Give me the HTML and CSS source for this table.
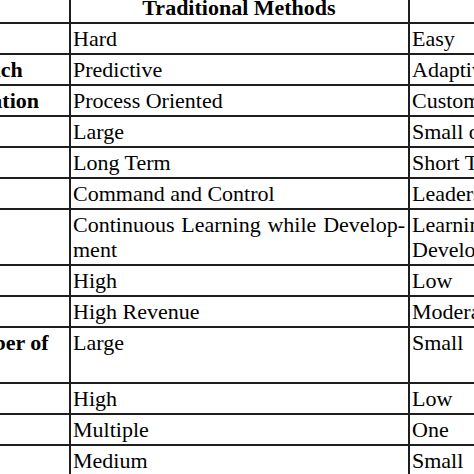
FILE: index.html
```html
<!DOCTYPE html>
<html lang="en">
<head>
<meta charset="utf-8">
<title>Traditional vs Agile Methods</title>
<link rel="stylesheet" href="styles.css">
</head>
<body>
<table class="cmp">
  <colgroup>
    <col class="c-param">
    <col class="c-trad">
    <col class="c-agile">
  </colgroup>
  <thead>
    <tr><th class="param"></th><th>Traditional Methods</th><th class="agile-head">Agile Methods</th></tr>
  </thead>
  <tbody>
    <tr><th class="param">Scope</th><td>Hard</td><td>Easy</td></tr>
    <tr><th class="param">Approach</th><td>Predictive</td><td>Adaptive</td></tr>
    <tr><th class="param">Orientation</th><td>Process Oriented</td><td>Customer Oriented</td></tr>
    <tr><th class="param">Size</th><td>Large</td><td>Small or Medium</td></tr>
    <tr><th class="param">Plan</th><td>Long Term</td><td>Short Term</td></tr>
    <tr><th class="param">Style</th><td>Command and Control</td><td>Leadership and Teamwork</td></tr>
    <tr><th class="param">Focus</th><td>Continuous Learning while Develop&shy;ment</td><td>Learning while Development</td></tr>
    <tr><th class="param">Cost</th><td>High</td><td>Low</td></tr>
    <tr><th class="param">Goal</th><td>High Revenue</td><td>Moderate Revenue</td></tr>
    <tr><th class="param param-long">Number of Staff</th><td>Large</td><td>Small</td></tr>
    <tr><th class="param">Risk</th><td>High</td><td>Low</td></tr>
    <tr><th class="param">Sites</th><td>Multiple</td><td>One</td></tr>
    <tr><th class="param">Docs</th><td>Medium</td><td>Small</td></tr>
  </tbody>
</table>
</body>
</html>
```
FILE: styles.css
```css
html, body {
  margin: 0;
  padding: 0;
  background: #ffffff;
}

body {
  font-family: "Liberation Serif", "Times New Roman", serif;
  font-size: 22px;
  line-height: 25px;
  color: #000000;
  overflow: hidden;
  width: 474px;
  height: 474px;
}

.cmp {
  border-collapse: collapse;
  table-layout: fixed;
  width: 739px;
  margin: -9px 0 0 -75px;
}

.c-param { width: 144px; }
.c-trad  { width: 339px; }
.c-agile { width: 256px; }

.cmp th,
.cmp td {
  border: 2px solid #1e1e1e;
  padding: 2px 3px 2px 2px;
  vertical-align: top;
  text-align: justify;
  font-weight: normal;
}

.cmp thead th {
  text-align: center;
  font-weight: bold;
}

.cmp thead th.agile-head {
  padding-left: 110px;
}

.cmp tbody th.param {
  font-weight: bold;
  text-align: left;
  padding-right: 21px;
}

.cmp tbody th.param-long {
  padding-left: 20px;
  padding-right: 3px;
}
```
